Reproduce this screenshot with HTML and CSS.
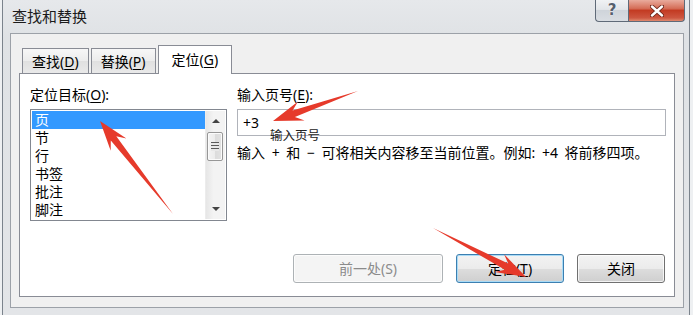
FILE: index.html
```html
<!DOCTYPE html>
<html lang="zh-CN">
<head>
<meta charset="utf-8">
<title>查找和替换</title>
<link rel="stylesheet" href="styles.css">
</head>
<body>
<div class="stage">
  <div class="window">
    <div class="titlebar">
      <span class="title">查找和替换</span>
      <div class="caption-buttons">
        <div class="cap-btn help">?</div>
        <div class="cap-btn close">
          <svg width="14" height="12" viewBox="0 0 14 12">
            <path d="M2 1.5 L12 10.5 M12 1.5 L2 10.5" stroke="#6b2418" stroke-width="4.2" stroke-linecap="round" fill="none"/>
            <path d="M2 1.5 L12 10.5 M12 1.5 L2 10.5" stroke="#ffffff" stroke-width="2.4" stroke-linecap="round" fill="none"/>
          </svg>
        </div>
      </div>
    </div>
    <div class="client">
      <div class="tabs">
        <div class="tab">查找(<u>D</u>)</div>
        <div class="tab">替换(<u>P</u>)</div>
        <div class="tab active">定位(<u>G</u>)</div>
      </div>
      <div class="panel">
        <div class="columns">
          <div class="col-left">
            <div class="label">定位目标(<u>O</u>):</div>
            <div class="listbox">
              <ul class="items">
                <li class="selected">页</li>
                <li>节</li>
                <li>行</li>
                <li>书签</li>
                <li>批注</li>
                <li>脚注</li>
              </ul>
              <div class="scrollbar">
                <div class="sb-btn"><span class="tri-up"></span></div>
                <div class="thumb"><span class="grip"></span></div>
                <div class="sb-track"></div>
                <div class="sb-btn"><span class="tri-down"></span></div>
              </div>
            </div>
          </div>
          <div class="col-right">
            <div class="label">输入页号(<u>E</u>):</div>
            <div class="input">+3<span class="tooltip">输入页号</span></div>
            <div class="hint">输入 + 和 − 可将相关内容移至当前位置。例如: +4 将前移四项。</div>
          </div>
        </div>
        <div class="buttons">
          <div class="btn btn-prev disabled">前一处(S)</div>
          <div class="btn btn-goto default">定位(<u>T</u>)</div>
          <div class="btn btn-close">关闭</div>
        </div>
      </div>
    </div>
  </div>
  <svg class="arrows" width="693" height="315" viewBox="0 0 693 315">
    <polygon points="173,214 116.3,136.2 126.4,138.4 100,121 110.7,150.8 110.8,140.5"/>
    <polygon points="358,91 292.6,110.4 298,101.6 273,121 304.6,120.4 294.9,117"/>
    <polygon points="433,228 504.9,269.8 494.8,271.9 526,277 504.1,254.2 508.2,263.6"/>
  </svg>
</div>
</body>
</html>
```

FILE: styles.css
```css
* { box-sizing: border-box; }
html, body { margin: 0; padding: 0; }
body {
  width: 693px;
  height: 315px;
  overflow: hidden;
  background: #eef0f2;
  font-family: "Noto Sans", "Noto Sans CJK SC", sans-serif;
  font-size: 14px;
  color: #000;
}
u { text-decoration: underline; text-underline-offset: 2px; }

.stage { position: relative; width: 693px; height: 315px; }

.window {
  margin-left: 2px;
  width: 688px;
  height: 315px;
  border-left: 1px solid #7b838c;
  border-right: 1px solid #7b838c;
  background: linear-gradient(180deg, #e6e8eb 0%, #dfe2e5 12%, #e3e5e8 100%);
  display: flex;
  flex-direction: column;
}

.titlebar {
  height: 33px;
  display: flex;
  justify-content: space-between;
  align-items: flex-start;
}
.title {
  margin-left: 9px;
  margin-top: 7px;
  font-size: 15px;
  line-height: 18px;
  color: #1b1b1b;
}
.caption-buttons { display: flex; margin-right: 4px; }
.cap-btn {
  height: 22px;
  border: 1px solid #5f6a78;
  border-top: none;
}
.help {
  width: 33px;
  border-right: none;
  border-radius: 0 0 0 4px;
  background: linear-gradient(180deg, #f0f2f4 0%, #e2e5e9 45%, #cfd4da 50%, #d9dde2 100%);
  text-align: center;
  font: bold 15px/21px "DejaVu Sans", sans-serif;
  color: #56606e;
  text-shadow: 0 0 1px #fff, 0 0 1px #fff;
}
.close {
  width: 57px;
  border-radius: 0 0 4px 0;
  background: linear-gradient(180deg, #e9ab9d 0%, #d56e58 40%, #c33b23 50%, #cd5640 85%, #df896e 100%);
  display: flex;
  align-items: center;
  justify-content: center;
}

.client {
  margin-left: 7px;
  width: 674px;
  height: 275px;
  border: 1px solid #9ca1a8;
  background: #f0f0f0;
  padding: 11px 0 0 8px;
  display: flex;
  flex-direction: column;
}

.tabs {
  display: flex;
  align-items: flex-end;
  height: 28px;
  margin-left: 3px;
  position: relative;
  z-index: 2;
}
.tab {
  height: 25px;
  border: 1px solid #898c95;
  border-bottom: none;
  padding: 1px 9px 0;
  margin-right: 2px;
  line-height: 23px;
  background: linear-gradient(180deg, #f7f7f7 0%, #ececec 50%, #e0e0e0 51%, #e9e9e9 100%);
  white-space: nowrap;
}
.tab.active {
  height: 29px;
  margin-bottom: -1px;
  padding: 0 13px;
  line-height: 28px;
  background: #fff;
}

.panel {
  width: 656px;
  height: 224px;
  border: 1px solid #898c95;
  background: #fff;
  padding: 12px 8px 13px 10px;
  display: flex;
  flex-direction: column;
}

.columns { display: flex; gap: 10px; }
.col-left { width: 197px; }
.col-right { flex: 1; }
.label { line-height: 18px; margin-bottom: 5px; white-space: nowrap; }

.listbox {
  display: flex;
  height: 112px;
  border: 1px solid #828790;
  padding: 1px;
}
.items {
  flex: 1;
  list-style: none;
  margin: 0;
  padding: 0;
}
.items li { height: 18px; line-height: 18px; padding-left: 3px; }
.items li.selected { background: #3399ff; color: #fff; }

.scrollbar {
  width: 20px;
  display: flex;
  flex-direction: column;
  background: linear-gradient(90deg, #e6e6e6 0%, #f3f3f3 40%, #f3f3f3 100%);
  border-left: 1px solid #ececec;
}
.sb-btn {
  height: 20px;
  display: flex;
  align-items: center;
  justify-content: center;
}
.tri-up {
  width: 0; height: 0;
  border-left: 4px solid transparent;
  border-right: 4px solid transparent;
  border-bottom: 4px solid #444;
}
.tri-down {
  width: 0; height: 0;
  border-left: 4px solid transparent;
  border-right: 4px solid transparent;
  border-top: 4px solid #444;
}
.thumb {
  margin: 1px 2px 0 1px;
  height: 29px;
  border: 1px solid #979797;
  border-radius: 2px;
  background: linear-gradient(90deg, #f4f4f4 0%, #ececec 50%, #dcdcdc 51%, #e2e2e2 100%);
  box-shadow: inset 0 0 0 1px #fbfbfb;
  display: flex;
  align-items: center;
  justify-content: center;
}
.grip {
  width: 8px;
  height: 9px;
  background: repeating-linear-gradient(180deg, #5a5a5a 0 1px, #e8e8e8 1px 3px);
}
.sb-track { flex: 1; }

.input {
  position: relative;
  height: 27px;
  border: 1px solid #b0b3ba;
  padding-left: 5px;
  line-height: 25px;
  font-size: 14px;
}
.tooltip {
  position: absolute;
  left: 32px;
  top: 18px;
  font-size: 12.5px;
  line-height: 16px;
  color: #222;
  white-space: nowrap;
}
.hint { margin-top: 8px; line-height: 18px; white-space: nowrap; word-spacing: 3px; }

.buttons {
  margin-top: auto;
  margin-right: 1px;
  display: flex;
  justify-content: flex-end;
  gap: 13px;
}
.btn {
  height: 29px;
  border: 1px solid #707070;
  border-radius: 3px;
  background: linear-gradient(180deg, #f3f3f3 0%, #ebebeb 50%, #dddddd 51%, #cfcfcf 100%);
  box-shadow: inset 0 0 0 1px rgba(255, 255, 255, 0.75);
  text-align: center;
  line-height: 27px;
  white-space: nowrap;
}
.btn-prev { width: 150px; }
.btn-goto { width: 108px; }
.btn-close { width: 88px; }
.btn.disabled {
  border-color: #adb2b5;
  background: #f4f4f4;
  color: #8b8b8b;
}
.btn.default {
  border-color: #3c7fb1;
  box-shadow: inset 0 0 0 1px #a9dbf6;
}

.arrows {
  position: absolute;
  left: 0;
  top: 0;
  pointer-events: none;
  fill: #e63a2b;
}
```
